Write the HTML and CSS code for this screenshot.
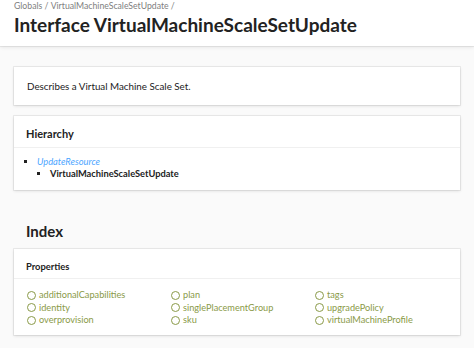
FILE: index.html
```html
<!DOCTYPE html>
<html lang="en">
<head>
  <meta charset="UTF-8" />
  <title>VirtualMachineScaleSetUpdate</title>
  <link rel="stylesheet" href="styles.css">
</head>
<body>
  <header class="page-header">
    <ul class="breadcrumb">
      <li><a href="#">Globals</a></li>
      <li><a href="#">VirtualMachineScaleSetUpdate</a></li>
    </ul>
    <h1>Interface VirtualMachineScaleSetUpdate</h1>
  </header>

  <div class="container">
    <section class="panel comment">
      <p>Describes a Virtual Machine Scale Set.</p>
    </section>

    <section class="panel">
      <h3 class="panel-title">Hierarchy</h3>
      <ul class="hierarchy">
        <li>
          <a href="#" class="parent">UpdateResource</a>
          <ul class="hierarchy">
            <li><span class="target">VirtualMachineScaleSetUpdate</span></li>
          </ul>
        </li>
      </ul>
    </section>

    <h2 class="index-title">Index</h2>

    <section class="panel">
      <h3 class="panel-title small">Properties</h3>
      <ul class="index-list">
        <li><a href="#">additionalCapabilities</a></li>
        <li><a href="#">identity</a></li>
        <li><a href="#">overprovision</a></li>
        <li><a href="#">plan</a></li>
        <li><a href="#">singlePlacementGroup</a></li>
        <li><a href="#">sku</a></li>
        <li><a href="#">tags</a></li>
        <li><a href="#">upgradePolicy</a></li>
        <li><a href="#">virtualMachineProfile</a></li>
      </ul>
    </section>
  </div>
</body>
</html>
```

FILE: styles.css
```css
* {
  box-sizing: border-box;
}
body {
  margin: 0;
  font-family: Lato, 'Open Sans', sans-serif;
  background: #fafafa;
  color: #222;
}
a {
  text-decoration: none;
}
.page-header {
  background: #fff;
  padding: 0 14px;
  height: 46px;
  box-shadow: 0 0 0 1px rgba(0, 0, 0, 0.06), 0 1px 4px rgba(0, 0, 0, 0.1);
}
.breadcrumb {
  list-style: none;
  margin: 0;
  padding: 0;
  display: flex;
  font-size: 8.7px;
  line-height: 12px;
  color: #808080;
}
.breadcrumb li::after {
  content: " / ";
  white-space: pre;
}
.breadcrumb a {
  color: #808080;
}
h1 {
  margin: 1px 0 0;
  font-size: 19px;
  line-height: 24px;
  font-weight: 700;
  color: #222;
}
.container {
  padding: 21px 14px 0;
}
.panel {
  background: #fff;
  margin-bottom: 11px;
  box-shadow: 0 0 0 1px rgba(0, 0, 0, 0.06), 0 1px 3px rgba(0, 0, 0, 0.12);
}
.comment {
  padding: 12px 13px;
}
.comment p {
  margin: 0;
  font-size: 9.8px;
  line-height: 14px;
}
.panel-title {
  margin: 0;
  padding: 10px 12px 6px;
  font-size: 11px;
  line-height: 15px;
  border-bottom: 1px solid #f0f0f0;
}
.panel-title.small {
  font-size: 9.4px;
  padding: 11px 12px 5px;
  line-height: 13px;
}
.hierarchy {
  list-style: square;
  margin: 0;
  padding: 8px 13px 11px 23px;
  font-size: 9.3px;
  line-height: 11.5px;
}
.hierarchy .hierarchy {
  padding: 0 0 0 13px;
}
.parent {
  color: #4da6ff;
  font-style: italic;
}
.target {
  font-weight: 700;
  color: #222;
}
.index-title {
  margin: 31px 0 8px 12px;
  font-size: 15px;
  line-height: 20px;
}
.index-list {
  list-style: none;
  margin: 0;
  padding: 10px 13px 8px;
  display: grid;
  grid-template-columns: repeat(3, 144px);
  grid-template-rows: repeat(3, 12.5px);
  grid-auto-flow: column;
  font-size: 9.2px;
  line-height: 12.5px;
}
.index-list a {
  color: #8a9a48;
  display: flex;
  align-items: center;
  gap: 3px;
}
.index-list a::before {
  content: "";
  width: 7px;
  height: 7px;
  border: 1px solid #8a9a48;
  border-radius: 50%;
}
```
